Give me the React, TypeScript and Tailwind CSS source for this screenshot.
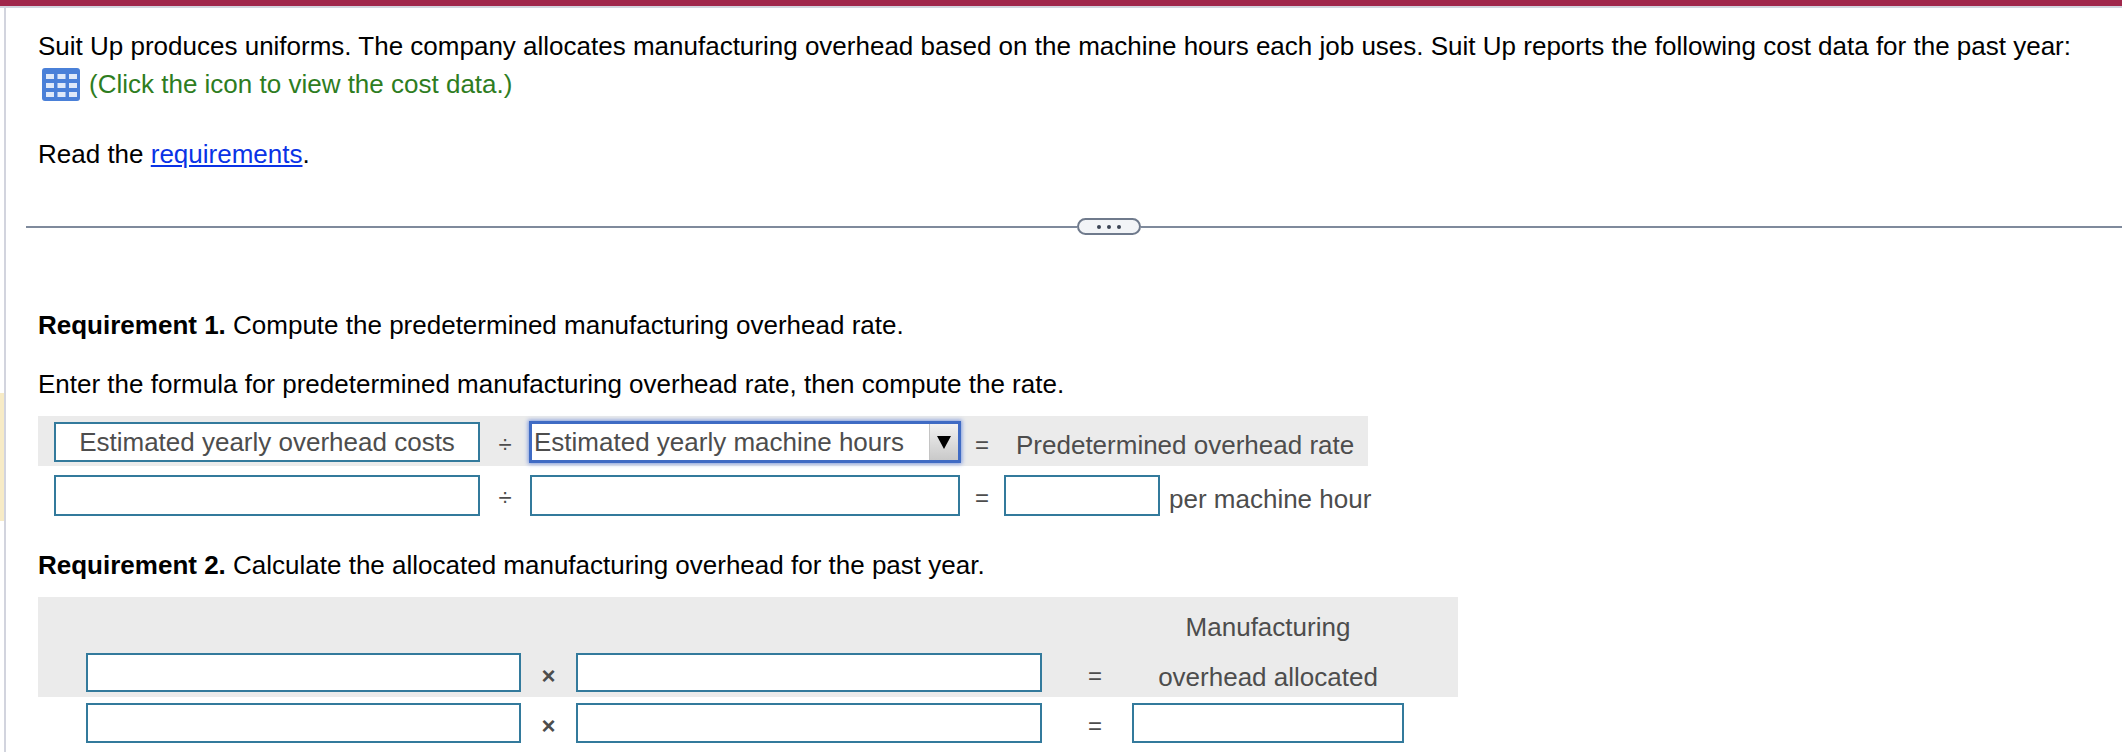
const Box = ({ className = "" }: { className?: string }) => (
  <div className={`shrink-0 border-2 border-[#337a9c] bg-white ${className}`} />
);

const Sym = ({ children, className = "" }: { children: string; className?: string }) => (
  <span className={`shrink-0 text-center text-[24px] leading-[40px] ${className}`}>{children}</span>
);

const GridIcon = () => (
  <svg width="38" height="33" viewBox="0 0 38 33" className="shrink-0">
    <rect width="38" height="33" rx="3" fill="#4a80d8" />
    {[6, 15, 24].map((y) =>
      [4, 15.5, 27].map((x) => <rect key={`${x}-${y}`} x={x} y={y} width="8" height="5" fill="#dfe9f9" />)
    )}
  </svg>
);

export default function App() {
  return (
    <div className="relative h-[752px] w-[2122px] overflow-hidden bg-white font-['Liberation_Sans',Arial,sans-serif] text-[26px] text-black">
      <div className="h-[6px] bg-[#a0274b]" />
      <div className="h-[2px] bg-[#d2d4de]" />
      {/* yellow marker on the left edge */}
      <div className="absolute left-0 top-[393px] h-[128px] w-[4px] bg-[#f7ebc6]" />
      <div className="ml-[4px] h-[744px] border-l-2 border-[#d2d4de] pl-[32px]">
        <p className="pt-[22px] leading-[32px]">
          Suit Up produces uniforms. The company allocates manufacturing overhead based on the machine hours each job uses. Suit Up reports the following cost data for the past year:
        </p>
        <div className="mt-[4px] flex h-[36px] items-center gap-[9px] pl-[4px] text-[#2e7d1f]">
          <GridIcon />
          <span>(Click the icon to view the cost data.)</span>
        </div>
        <p className="mt-[36px] leading-[32px]">
          Read the <span className="text-[#0a33e6] underline">requirements</span>.
        </p>

        <div className="mt-[48px] -ml-[12px] flex items-center">
          <div className="h-[2px] w-[1051px] bg-[#7f8a9c]" />
          <div className="flex h-[17px] w-[64px] items-center justify-center gap-[6px] rounded-full border-2 border-[#6f7a8c] bg-[#f2f4f7]">
            <span className="size-[4px] rounded-full bg-[#3c4454]" />
            <span className="size-[4px] rounded-full bg-[#3c4454]" />
            <span className="size-[4px] rounded-full bg-[#3c4454]" />
          </div>
          <div className="h-[2px] flex-1 bg-[#7f8a9c]" />
        </div>

        <p className="mt-[74px] leading-[32px]">
          <b>Requirement 1.</b> Compute the predetermined manufacturing overhead rate.
        </p>
        <p className="mt-[27px] leading-[32px]">Enter the formula for predetermined manufacturing overhead rate, then compute the rate.</p>

        {/* Requirement 1 formula */}
        <div className="mt-[16px] text-[#4d4d4d]">
          <div className="flex h-[50px] w-[1330px] items-start bg-[#ebebeb] pl-[16px] pt-[6px]">
            <div className="flex h-[40px] w-[426px] shrink-0 items-center justify-center border-2 border-[#337a9c] bg-white">
              Estimated yearly overhead costs
            </div>
            <Sym className="mt-[3px] w-[50px]">÷</Sym>
            <div className="flex h-[40px] w-[430px] shrink-0 items-center justify-between border-2 border-[#3f6bc4] bg-white pl-[2px] shadow-[0_0_0_1px_#3f6bc4,0_0_4px_2px_#7f9ade]">
              <span>Estimated yearly machine hours</span>
              <div className="flex h-[36px] w-[29px] items-center justify-center border-l border-[#c4c4c4] bg-gradient-to-b from-[#f2f2f2] to-[#c9c9c9]">
                <svg width="14" height="13" viewBox="0 0 14 13">
                  <path d="M0 0H14L7 13Z" fill="#000" />
                </svg>
              </div>
            </div>
            <Sym className="mt-[3px] w-[44px]">=</Sym>
            <span className="ml-[12px] mt-[3px] leading-[40px]">Predetermined overhead rate</span>
          </div>
          <div className="mt-[9px] flex h-[41px] items-start pl-[16px]">
            <Box className="h-[41px] w-[426px] border-[#3c69c5]" />
            <Sym className="mt-[3px] w-[50px]">÷</Sym>
            <Box className="h-[41px] w-[430px]" />
            <Sym className="mt-[3px] w-[44px]">=</Sym>
            <Box className="h-[41px] w-[156px]" />
            <span className="ml-[9px] mt-[4px] leading-[40px]">per machine hour</span>
          </div>
        </div>

        <p className="mt-[33px] leading-[32px]">
          <b>Requirement 2.</b> Calculate the allocated manufacturing overhead for the past year.
        </p>

        {/* Requirement 2 table */}
        <div className="mt-[16px] text-[#4d4d4d]">
          <div className="w-[1420px] bg-[#ebebeb] pl-[48px]">
            <div className="h-[56px] pl-[1046px] pt-[12px] text-center leading-[36px]">
              <div className="w-[272px]">Manufacturing</div>
            </div>
            <div className="flex h-[44px] items-start">
              <Box className="h-[39px] w-[435px]" />
              <Sym className="mt-[3px] w-[55px] font-bold">×</Sym>
              <Box className="h-[39px] w-[466px]" />
              <Sym className="mt-[3px] w-[90px] pl-[16px]">=</Sym>
              <span className="mt-[4px] w-[272px] text-center leading-[40px]">overhead allocated</span>
            </div>
          </div>
          <div className="mt-[6px] flex h-[40px] items-start pl-[48px]">
            <Box className="h-[40px] w-[435px]" />
            <Sym className="mt-[3px] w-[55px] font-bold">×</Sym>
            <Box className="h-[40px] w-[466px]" />
            <Sym className="mt-[3px] w-[90px] pl-[16px]">=</Sym>
            <Box className="h-[40px] w-[272px]" />
          </div>
        </div>
      </div>
    </div>
  );
}
